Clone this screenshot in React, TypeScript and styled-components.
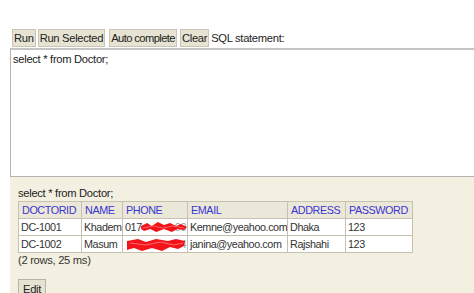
import * as React from "react";
import styled, { createGlobalStyle, css } from "styled-components";

interface DoctorRow {
  id: string;
  name: string;
  phoneStart: string;
  phoneEnd: string;
  email: string;
  address: string;
  password: string;
}

const columns = [
  { name: "DOCTORID", width: 63 },
  { name: "NAME", width: 41 },
  { name: "PHONE", width: 65 },
  { name: "EMAIL", width: 100 },
  { name: "ADDRESS", width: 58 },
  { name: "PASSWORD", width: 67 },
];

const rows: DoctorRow[] = [
  {
    id: "DC-1001",
    name: "Khadem",
    phoneStart: "017",
    phoneEnd: "09",
    email: "Kemne@yeahoo.com",
    address: "Dhaka",
    password: "123",
  },
  {
    id: "DC-1002",
    name: "Masum",
    phoneStart: "",
    phoneEnd: "04",
    email: "janina@yeahoo.com",
    address: "Rajshahi",
    password: "123",
  },
];

const text = css`
  font-family: "Liberation Sans", Arial, sans-serif;
  font-size: 11.2px;
  letter-spacing: -0.3px;
`;

const cellText = css`
  font-family: "Liberation Sans", Arial, sans-serif;
  font-size: 10.8px;
  letter-spacing: -0.42px;
`;

const GlobalStyle = createGlobalStyle`
  html, body {
    margin: 0;
    padding: 0;
    background: #ffffff;
    overflow: hidden;
  }
  body {
    ${text}
    color: #222;
  }
`;

const Scribble: React.FC<{ full?: boolean }> = ({ full }) => (
  <ScribbleSvg viewBox="0 0 60 14" preserveAspectRatio="none" $full={full}>
    {full ? (
      <>
        <path
          d="M1 3 L12 1 L20 4 L30 1 L42 3 L50 1 L59 3 L58 8 L52 11 L44 9 L36 13 L26 10 L16 13 L8 10 L1 12 Z"
          fill="#f2141a"
        />
        <path d="M4 5 L20 7 L34 4 L48 7 L57 5" stroke="#ff6a6a" strokeWidth="1" fill="none" />
      </>
    ) : (
      <>
        <path
          d="M0 6 L8 3 L14 6 L22 2 L30 5 L38 3 L46 6 L52 4 L60 7 L56 10 L48 9 L40 12 L30 9 L20 12 L12 9 L4 11 L0 9 Z"
          fill="#f2141a"
        />
        <path d="M2 8 L16 6 L28 8 L42 6 L56 8" stroke="#ff6a6a" strokeWidth="1" fill="none" />
      </>
    )}
  </ScribbleSvg>
);

const App: React.FC = () => {
  return (
    <>
      <GlobalStyle />
      <Page>
        <Toolbar>
          <ToolButton>Run</ToolButton>
          <ToolButton $gap={4}>Run Selected</ToolButton>
          <ToolButton $gap={3} $tight>
            Auto complete
          </ToolButton>
          <ToolButton $gap={2}>Clear</ToolButton>
          <Label>SQL statement:</Label>
        </Toolbar>
        <Editor>select * from Doctor;</Editor>
        <ResultPanel>
          <Query>select * from Doctor;</Query>
          <Table>
            <colgroup>
              {columns.map((c) => (
                <col key={c.name} style={{ width: c.width }} />
              ))}
            </colgroup>
            <thead>
              <tr>
                {columns.map((c) => (
                  <Th key={c.name}>{c.name}</Th>
                ))}
              </tr>
            </thead>
            <tbody>
              {rows.map((r) => (
                <tr key={r.id}>
                  <Td>{r.id}</Td>
                  <Td>{r.name}</Td>
                  <PhoneTd>
                    <PhoneText>{r.phoneStart}</PhoneText>
                    <Scribble full={!r.phoneStart} />
                    <PhoneEnd>{r.phoneEnd}</PhoneEnd>
                  </PhoneTd>
                  <Td>{r.email}</Td>
                  <Td>{r.address}</Td>
                  <Td>{r.password}</Td>
                </tr>
              ))}
            </tbody>
          </Table>
          <Summary>(2 rows, 25 ms)</Summary>
          <EditButton>Edit</EditButton>
        </ResultPanel>
      </Page>
    </>
  );
};

const Page = styled.div`
  width: 474px;
  height: 293px;
  overflow: hidden;
  background: #ffffff;
`;

const Toolbar = styled.div`
  display: flex;
  align-items: center;
  padding: 29px 0 0 12px;
  height: 18px;
`;

const ToolButton = styled.button<{ $gap?: number; $tight?: boolean }>`
  ${text}
  letter-spacing: ${(p) => (p.$tight ? "-0.6px" : "-0.3px")};
  height: 18px;
  margin: 0 ${(p) => p.$gap ?? 2}px 0 0;
  padding: 0 1px;
  color: #222;
  background: #e6e3d3;
  border: 1px solid #c9c6b8;
  border-radius: 0;
  line-height: 16px;
`;

const Label = styled.span`
  color: #222;
`;

const Editor = styled.div`
  box-sizing: border-box;
  margin: 1px 0 0 10px;
  width: 480px;
  height: 129px;
  padding: 3px 2px;
  border: 1px solid #b4b4b4;
  border-top: 2px solid #c4c4c4;
  background: #ffffff;
  color: #222;
`;

const ResultPanel = styled.div`
  box-sizing: border-box;
  margin-left: 10px;
  height: 120px;
  padding: 9px 8px 0;
  background: #f3f0e1;
`;

const Query = styled.div`
  line-height: 15px;
  color: #222;
`;

const Table = styled.table`
  border-collapse: collapse;
  table-layout: fixed;
  width: 394px;
  border: 1px solid #c2beae;
`;

const Th = styled.th`
  ${cellText}
  height: 16px;
  padding: 0 1px 0 3px;
  text-align: left;
  font-weight: normal;
  color: #3a34d2;
  background: #ebe8d9;
  border: 1px solid #c6c2b2;
  white-space: nowrap;
  overflow: hidden;
`;

const Td = styled.td`
  ${cellText}
  height: 16px;
  padding: 0 0 0 2px;
  color: #333;
  background: #ffffff;
  border: 1px solid #c6c2b2;
  white-space: nowrap;
  overflow: hidden;
`;

const PhoneTd = styled(Td)`
  position: relative;
`;

const PhoneText = styled.span`
  color: #333;
`;

const PhoneEnd = styled.span`
  position: absolute;
  right: 1px;
  top: 2px;
  color: #999;
`;

const ScribbleSvg = styled.svg<{ $full?: boolean }>`
  position: absolute;
  top: ${(p) => (p.$full ? "2px" : "1px")};
  left: ${(p) => (p.$full ? "3px" : "18px")};
  width: ${(p) => (p.$full ? "60px" : "46px")};
  height: 14px;
  z-index: 1;
`;

const Summary = styled.div`
  margin-top: 0;
  line-height: 15px;
  color: #333;
`;

const EditButton = styled.button`
  ${text}
  margin-top: 11px;
  height: 20px;
  padding: 0 4px;
  color: #222;
  background: #e6e3d3;
  border: 1px solid #b8b5a6;
  border-radius: 0;
`;

export default App;
